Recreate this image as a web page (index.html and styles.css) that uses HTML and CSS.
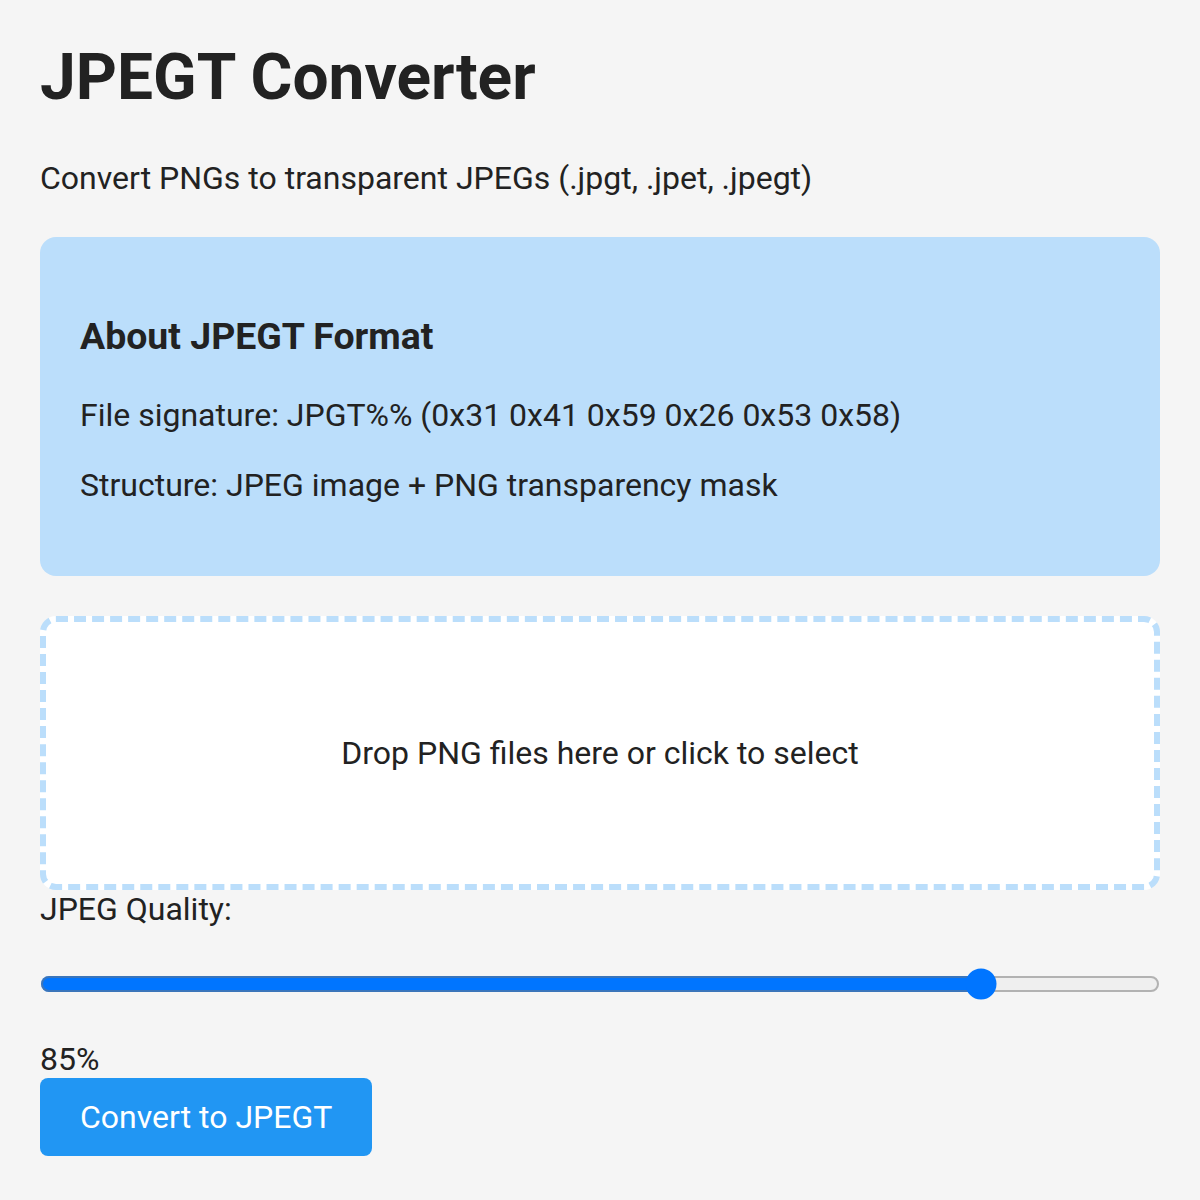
FILE: index.html
```html
<!DOCTYPE html>
<html lang="en">
<head>
<meta charset="utf-8">
<title>JPEGT Converter</title>
<link rel="stylesheet" href="styles.css">
</head>
<body>
<main class="page">
  <h1 class="title">JPEGT Converter</h1>
  <p class="subtitle">Convert PNGs to transparent JPEGs (.jpgt, .jpet, .jpegt)</p>

  <section class="info">
    <h3 class="info-title">About JPEGT Format</h3>
    <p class="info-text">File signature: JPGT%% (0x31 0x41 0x59 0x26 0x53 0x58)</p>
    <p class="info-text">Structure: JPEG image + PNG transparency mask</p>
  </section>

  <div class="dropzone">
    <p class="dropzone-text">Drop PNG files here or click to select</p>
  </div>

  <div class="quality">
    <label class="quality-label" for="quality">JPEG Quality:</label>
    <input class="quality-slider" id="quality" type="range" min="0" max="100" value="85">
    <div class="quality-value">85%</div>
  </div>

  <button class="convert-btn" type="button">Convert to JPEGT</button>
</main>
</body>
</html>
```

FILE: styles.css
```css
html, body {
  margin: 0;
  padding: 0;
  background: #f5f5f5;
}

body {
  font-family: Roboto, "Liberation Sans", Arial, sans-serif;
  font-size: 32px;
  line-height: 38px;
  color: #222;
}

.page {
  padding: 40px;
}

.title {
  font-size: 64px;
  line-height: 76px;
  font-weight: 700;
  margin: 0 0 43px;
}

.subtitle {
  margin: 0 0 40px;
}

.info {
  background: #bbdefb;
  border-radius: 16px;
  padding: 40px;
  margin: 0 0 40px;
}

.info-title {
  font-size: 37.44px;
  line-height: 44px;
  font-weight: 700;
  margin: 37.44px 0;
}

.info-text {
  margin: 32px 0;
}

.dropzone {
  background: #fff;
  border: 6px dashed #bbdefb;
  border-radius: 16px;
  padding: 80px;
  text-align: center;
}

.dropzone-text {
  margin: 32px 0;
}

.quality-label {
  display: block;
}

.quality-slider {
  display: block;
  zoom: 2;
  width: 100%;
  margin: 20px 0;
}

.quality-value {
  margin-bottom: 0;
}

.convert-btn {
  display: block;
  font-family: inherit;
  font-size: 32px;
  line-height: 38px;
  color: #fff;
  background: #2196f3;
  border: none;
  border-radius: 8px;
  padding: 20px 40px;
}
```
